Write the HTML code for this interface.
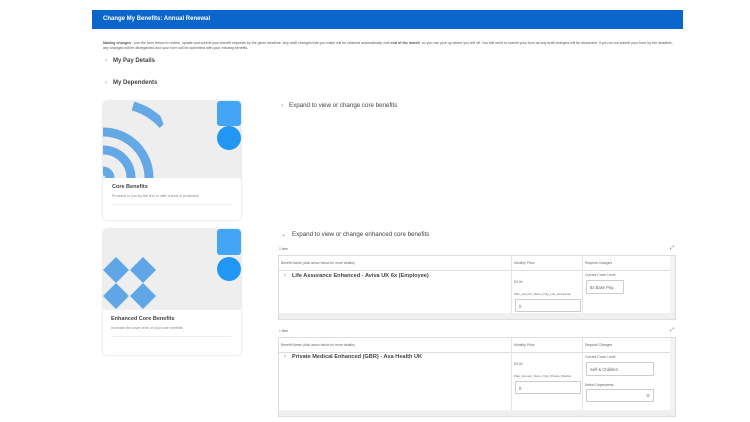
<!DOCTYPE html>
<html><head><meta charset="utf-8"><style>
*{margin:0;padding:0;box-sizing:border-box}
body{width:750px;height:422px;background:#fff;font-family:"Liberation Sans",sans-serif;color:#333;position:relative;overflow:hidden}
.a{position:absolute}
.hdr{left:92px;top:10px;width:591px;height:19px;background:#0a66cc;color:#fff;font-size:6px;font-weight:bold;padding:6px 0 0 11px}
.t5{font-size:3.6px;color:#555;line-height:5px}
.sec{font-size:6px;font-weight:bold;color:#444}
.chev{color:#888;font-size:6px;font-weight:normal;margin-right:6px}
.card{background:#fff;border-radius:4px;box-shadow:0 0 2px rgba(0,0,0,.2);overflow:hidden}
.img{background:#eeeeee;position:absolute;left:0;top:0;width:100%}
.tbl{border:1px solid #ddd;background:#fff}
.th{font-size:3.4px;color:#666}
.inp{border:1px solid #ccc;border-radius:1px;background:#fff;font-size:4.2px;color:#666;padding:4px 3px}
</style></head><body>
<div class="a hdr">Change My Benefits: Annual Renewal</div>
<div class="a t5" style="left:103px;top:41px;width:575px"><b>Making changes</b> - use the form below to review, update and submit your benefit requests by the given deadline. Any draft changes that you make will be retained automatically until <b>end of the month</b>, so you can pick up where you left off. You still need to submit your form as any draft changes will be discarded. If you do not submit your form by the deadline, any changes will be disregarded and your form will be submitted with your existing benefits.</div>
<div class="a sec" style="left:105px;top:58px"><span class="chev">›</span>My Pay Details</div>
<div class="a sec" style="left:105px;top:80px"><span class="chev">›</span>My Dependents</div>

<div class="a card" style="left:103px;top:101px;width:138px;height:119px">
 <div class="img" style="height:77px">
  <svg width="138" height="77" style="position:absolute;left:0;top:0">
   <rect x="114" y="0" width="24" height="25" rx="3" fill="#42a5f5"/>
   <circle cx="126" cy="37" r="12" fill="#2196f3"/>
   <g fill="none" stroke="#64a8e6" stroke-width="9">
    <path d="M0 31 A46 46 0 0 1 46 77"/>
    <path d="M0 49 A28 28 0 0 1 28 77"/>
    <path d="M0 70 A7 7 0 0 1 7 77"/>
    <path d="M30 5 A64 64 0 0 1 60 24"/>
   </g>
   <rect x="52" y="0" width="30" height="77" fill="#eeeeee" transform="rotate(-20 52 0)"/>
  </svg>
 </div>
 <div class="a" style="left:9px;top:83px;font-size:5.5px;font-weight:bold;color:#444">Core Benefits</div>
 <div class="a" style="left:9px;top:93px;font-size:3.6px;color:#888">Provided to you by the firm to offer a level of protection</div>
 <div class="a" style="left:9px;top:103px;width:120px;border-top:1px solid #eee"></div>
</div>

<div class="a card" style="left:103px;top:229px;width:138px;height:126px">
 <div class="img" style="height:81px">
  <svg width="138" height="81" style="position:absolute;left:0;top:0">
   <rect x="114" y="0" width="24" height="26" rx="3" fill="#42a5f5"/>
   <circle cx="126" cy="40" r="12" fill="#2196f3"/>
   <g fill="#5fa6e6">
    <polygon points="13,28 26,41 13,54 0,41"/>
    <polygon points="40,28 53,41 40,54 27,41"/>
    <polygon points="13,54 26,67 13,80 0,67"/>
    <polygon points="40,54 53,67 40,80 27,67"/>
   </g>
  </svg>
 </div>
 <div class="a" style="left:8px;top:87px;font-size:5.5px;font-weight:bold;color:#444">Enhanced Core Benefits</div>
 <div class="a" style="left:8px;top:97px;font-size:3.6px;color:#888">Increase the cover level of your core benefits</div>
 <div class="a" style="left:8px;top:107px;width:120px;border-top:1px solid #eee"></div>
</div>

<div class="a sec" style="left:281px;top:102px;font-weight:normal;color:#444;font-size:6.2px"><span class="chev">›</span>Expand to view or change core benefits</div>
<div class="a sec" style="left:281px;top:231px;font-weight:normal;color:#444;font-size:6.2px"><span class="chev">⌄</span>Expand to view or change enhanced core benefits</div>

<div class="a th" style="left:279px;top:247px">1 item</div>
<div class="a th" style="left:670px;top:245px;font-size:5px">⤢</div>
<div class="a tbl" style="left:278px;top:255px;width:398px;height:65px">
 <div class="a" style="left:0;top:14px;width:396px;border-top:1px solid #ddd"></div>
 <div class="a" style="left:232px;top:0;height:57px;border-left:1px solid #e5e5e5"></div>
 <div class="a" style="left:303px;top:0;height:57px;border-left:1px solid #e5e5e5"></div>
 <div class="a" style="left:391px;top:0;width:5px;height:63px;background:#f3f3f3"></div>
 <div class="a" style="left:0;top:57px;width:396px;height:6px;background:#efefef"></div>
 <div class="a th" style="left:2px;top:5px">Benefit Name (click arrow below for more details)</div>
 <div class="a th" style="left:235px;top:5px">Monthly Price</div>
 <div class="a th" style="left:306px;top:5px">Request Changes</div>
 <div class="a" style="left:5px;top:17px;font-size:5.6px;font-weight:bold;color:#444"><span class="chev">›</span>Life Assurance Enhanced - Aviva UK 6x (Employee)</div>
 <div class="a th" style="left:235px;top:24px">£0.00</div>
 <div class="a th" style="left:235px;top:36px;font-size:3px">Plan_Amount_Store_Only_Life_Assurance</div>
 <div class="a inp" style="left:236px;top:43px;width:66px;height:13px">0</div>
 <div class="a th" style="left:306px;top:17px">Current Cover Level</div>
 <div class="a inp" style="left:307px;top:24px;width:38px;height:14px">6x Base Pay</div>
</div>

<div class="a th" style="left:279px;top:329px">1 item</div>
<div class="a th" style="left:670px;top:327px;font-size:5px">⤢</div>
<div class="a tbl" style="left:278px;top:337px;width:398px;height:80px">
 <div class="a" style="left:0;top:14px;width:396px;border-top:1px solid #ddd"></div>
 <div class="a" style="left:232px;top:0;height:72px;border-left:1px solid #e5e5e5"></div>
 <div class="a" style="left:303px;top:0;height:72px;border-left:1px solid #e5e5e5"></div>
 <div class="a" style="left:391px;top:0;width:5px;height:78px;background:#f3f3f3"></div>
 <div class="a" style="left:0;top:72px;width:396px;height:6px;background:#efefef"></div>
 <div class="a th" style="left:2px;top:5px">Benefit Name (click arrow below for more details)</div>
 <div class="a th" style="left:235px;top:5px">Monthly Price</div>
 <div class="a th" style="left:306px;top:5px">Request Changes</div>
 <div class="a" style="left:5px;top:16px;font-size:5.6px;font-weight:bold;color:#444"><span class="chev">›</span>Private Medical Enhanced (GBR) - Axa Health UK</div>
 <div class="a th" style="left:235px;top:24px">£0.00</div>
 <div class="a th" style="left:235px;top:36px;font-size:3px">Plan_Amount_Store_Only_Private_Medica</div>
 <div class="a inp" style="left:236px;top:43px;width:66px;height:13px">0</div>
 <div class="a th" style="left:306px;top:17px">Current Cover Level</div>
 <div class="a inp" style="left:307px;top:24px;width:68px;height:14px">Self &amp; Children</div>
 <div class="a th" style="left:306px;top:45px">Select Dependents</div>
 <div class="a inp" style="left:307px;top:51px;width:68px;height:13px;text-align:right;padding:3px">☰</div>
</div>
</body></html>
